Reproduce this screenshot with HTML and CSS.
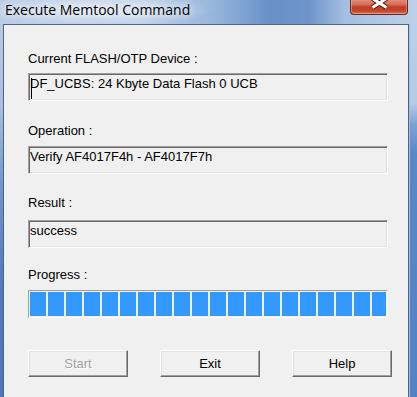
FILE: index.html
```html
<!DOCTYPE html>
<html>
<head>
<meta charset="utf-8">
<title>Execute Memtool Command</title>
<link rel="stylesheet" href="styles.css">
</head>
<body>
<div class="window">
  <div class="titlebar">
    <span class="title">Execute Memtool Command</span>
    <div class="close">
      <svg width="58" height="16" viewBox="0 0 58 16">
        <path d="M22.5 0.5 L36.5 9.5 M36.5 0.5 L22.5 9.5" stroke="#4a1a14" stroke-width="5" fill="none"/>
        <path d="M22.5 0.5 L36.5 9.5 M36.5 0.5 L22.5 9.5" stroke="#ffffff" stroke-width="3" fill="none"/>
      </svg>
    </div>
  </div>
  <div class="frame">
    <div class="frame-left"></div>
    <div class="client">
      <div class="label">Current FLASH/OTP Device :</div>
      <div class="field g-dev"><span class="caret"></span>DF_UCBS: 24 Kbyte Data Flash 0 UCB</div>

      <div class="label g-op">Operation :</div>
      <div class="field g-opf">Verify AF4017F4h - AF4017F7h</div>

      <div class="label g-res">Result :</div>
      <div class="field g-resf">success</div>

      <div class="label g-prog">Progress :</div>
      <div class="progress">
        <div class="chunks">
          <span></span><span></span><span></span><span></span><span></span>
          <span></span><span></span><span></span><span></span><span></span>
          <span></span><span></span><span></span><span></span><span></span>
          <span></span><span></span><span></span><span></span><span></span>
        </div>
      </div>

      <div class="buttons">
        <button class="btn disabled">Start</button>
        <button class="btn">Exit</button>
        <button class="btn">Help</button>
      </div>
    </div>
    <div class="frame-right"></div>
  </div>
</div>
</body>
</html>
```

FILE: styles.css
```css
html, body {
  margin: 0;
  padding: 0;
  width: 417px;
  height: 397px;
  overflow: hidden;
}

.window {
  width: 417px;
  height: 397px;
  display: flex;
  flex-direction: column;
}

.titlebar {
  height: 24px;
  flex: 0 0 24px;
  display: flex;
  align-items: flex-start;
  background:
    radial-gradient(ellipse 120px 16px at 95px 10px, rgba(255,255,255,0.55), rgba(255,255,255,0) 100%),
    linear-gradient(to right, #b9cde5 0px, #bfd1e8 140px, #96b5dc 215px, #6890c8 270px, #6f96cb 310px, #a4bfe0 345px, #bdd0e7 417px);
}

.title {
  font-family: "Open Sans", "DejaVu Sans", sans-serif;
  font-size: 14px;
  line-height: 19px;
  padding-left: 5px;
  color: #000;
  text-shadow: 0 0 6px rgba(255,255,255,0.8), 0 0 10px rgba(255,255,255,0.6);
}

.close {
  margin-left: auto;
  margin-right: 9px;
  margin-top: -1px;
  width: 58px;
  height: 16px;
  box-sizing: border-box;
  border: 1px solid #5a2a24;
  border-top: none;
  border-radius: 0 0 4px 4px;
  background: linear-gradient(to bottom, #e2917f 0%, #d66f59 35%, #c23c23 55%, #c7452a 80%, #dc7a5e 100%);
  box-shadow: inset 0 0 0 1px rgba(255,200,180,0.45);
  overflow: hidden;
}

.close svg {
  display: block;
  margin: -1px 0 0 -1px;
}

.frame {
  flex: 1;
  display: flex;
}

.frame-left {
  width: 3px;
  flex: 0 0 3px;
  background: linear-gradient(to bottom, #b6cae3 0px, #a9c0de 80px, #6f97cf 160px, #4e7cbf 260px, #4a78bb 397px);
}

.frame-right {
  width: 8px;
  flex: 0 0 8px;
  box-sizing: border-box;
  border-left: 1px solid #9ebde4;
  background: linear-gradient(to bottom, #bcd0e7 0px, #b5cae4 80px, #7ea3d4 100px, #5b87c8 130px, #5682c5 373px);
}

.client {
  width: 406px;
  flex: 0 0 406px;
  box-sizing: border-box;
  border: 1px solid #4f647e;
  border-bottom: none;
  background: #f0f0f0;
  padding: 26px 0 0 24px;
  font-family: "Liberation Sans", Arial, sans-serif;
  font-size: 13px;
  color: #000;
}

.label {
  line-height: 15px;
  height: 15px;
}

.g-op { margin-top: 22px; }
.g-res { margin-top: 21px; }
.g-prog { margin-top: 19px; }

.field {
  position: relative;
  width: 360px;
  height: 28px;
  box-sizing: border-box;
  margin-top: 8px;
  padding: 2px 0 0 1px;
  line-height: 15px;
  border: 1px solid;
  border-color: #a0a0a0 #ffffff #ffffff #a0a0a0;
  box-shadow: inset 1px 1px 0 #696969, inset -1px -1px 0 #e3e3e3;
  background: #f0f0f0;
  white-space: nowrap;
}

.g-dev { margin-top: 7px; }
.g-resf { margin-top: 10px; }

.caret {
  position: absolute;
  left: 2px;
  top: 4px;
  width: 1px;
  height: 21px;
  background: #000;
}

.progress {
  width: 360px;
  height: 28px;
  box-sizing: border-box;
  margin-top: 8px;
  padding: 1px;
  border: 1px solid;
  border-color: #a0a0a0 #ffffff #ffffff #a0a0a0;
  background: #f0f0f0;
}

.chunks {
  display: flex;
  gap: 2px;
  height: 24px;
  overflow: hidden;
}

.chunks span {
  flex: 0 0 16px;
  height: 24px;
  background: #3399ff;
}

.buttons {
  display: flex;
  gap: 32px;
  margin-top: 32px;
}

.btn {
  width: 100px;
  height: 27px;
  box-sizing: border-box;
  margin: 0;
  padding: 0;
  font-family: "Liberation Sans", Arial, sans-serif;
  font-size: 13px;
  color: #000;
  background: #f0f0f0;
  border: 1px solid;
  border-color: #ffffff #696969 #696969 #ffffff;
  box-shadow: inset -1px -1px 0 #a0a0a0, inset 1px 1px 0 #e3e3e3;
  border-radius: 0;
}

.btn.disabled {
  color: #a0a0a0;
  text-shadow: 1px 1px 0 #ffffff;
}
```
